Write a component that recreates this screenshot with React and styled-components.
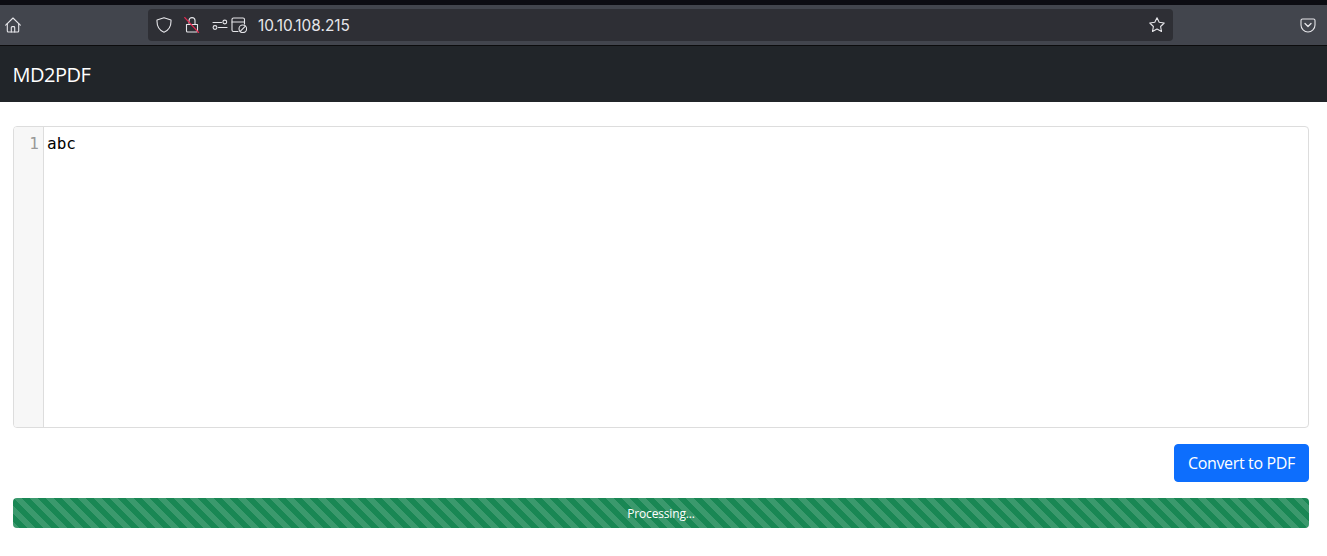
import React from "react";
import styled, { createGlobalStyle } from "styled-components";

const Global = createGlobalStyle`
  html, body { margin: 0; padding: 0; background: #fff; }
  body { font-family: "Open Sans", "Noto Sans", sans-serif; color: #212529; }
  * { box-sizing: border-box; }
`;

const TopStrip = styled.div`height: 5px; background: #0c0c12;`;

const Toolbar = styled.div`
  height: 40px;
  background: #42454d;
  display: flex;
  align-items: center;
  padding: 0 11px 0 5px;
`;

const ToolbarEdge = styled.div`height: 1px; background: #0c0c0d;`;

const IconSlot = styled.span`
  display: inline-flex;
  align-items: center;
  justify-content: center;
  color: #e6e6ea;
  flex: none;
`;

const HomeSlot = styled(IconSlot)`width: 16px; margin-right: 127px;`;

const UrlBar = styled.div`
  width: 1025px;
  height: 32px;
  background: #2e2f35;
  border-radius: 4px;
  display: flex;
  align-items: center;
  padding: 0 8px;
  color: #e6e6ea;
`;

const UrlIcons = styled.div`
  display: flex;
  align-items: center;
  gap: 12px;
  width: 102px;
  flex: none;
`;

const UrlPair = styled.div`display: flex; align-items: center; gap: 3px;`;

const UrlText = styled.span`
  font-size: 15.4px;
  flex: 1;
  font-family: "Inter", "Noto Sans", sans-serif;
  font-weight: 400;
`;

const PocketSlot = styled(IconSlot)`margin-left: auto;`;

const Navbar = styled.nav`
  height: 56px;
  background: #212529;
  display: flex;
  align-items: center;
  padding: 2px 13px 0 12.500px;
`;

const Brand = styled.span`
  font-size: 20px;
  line-height: 30px;
  color: #fff;
  font-weight: 400;
  letter-spacing: -0.5px;
`;

const Main = styled.main`
  padding: 24px 18px 0 13px;
  display: flex;
  flex-direction: column;
`;

const Editor = styled.div`
  height: 302px;
  border: 1px solid #ddd;
  border-radius: 4px;
  display: flex;
  overflow: hidden;
  font-family: "DejaVu Sans Mono", monospace;
  font-size: 16px;
  line-height: 22.4px;
`;

const Gutter = styled.div`
  width: 30px;
  background: #f7f7f7;
  border-right: 1px solid #ddd;
  color: #999;
  text-align: right;
  padding: 6px 4px 0 0;
`;

const Code = styled.div`
  flex: 1;
  color: #000;
  padding: 6px 0 0 3px;
`;

const Actions = styled.div`
  display: flex;
  justify-content: flex-end;
  margin-top: 16px;
`;

const Button = styled.button`
  height: 38px;
  width: 135px;
  background: #0d6efd;
  border: 1px solid #0d6efd;
  border-radius: 4px;
  color: #fff;
  font-family: inherit;
  font-size: 16px;
  line-height: 24px;
  letter-spacing: -0.35px;
  padding: 0;
`;

const Progress = styled.div`
  margin-top: 16px;
  height: 30px;
  border-radius: 4px;
  overflow: hidden;
  background-color: #198754;
  background-image: linear-gradient(
    45deg,
    rgba(255, 255, 255, 0.15) 25%,
    transparent 25%,
    transparent 50%,
    rgba(255, 255, 255, 0.15) 50%,
    rgba(255, 255, 255, 0.15) 75%,
    transparent 75%,
    transparent
  );
  background-size: 16px 16px;
  color: #fff;
  font-size: 12px;
  line-height: 31px;
  letter-spacing: -0.15px;
  text-align: center;
`;

const Stroke = ({ size = 16, children, sw = 1.1 }) => (
  <svg width={size} height={size} viewBox="0 0 16 16" fill="none" stroke="currentColor" strokeWidth={sw} strokeLinecap="round" strokeLinejoin="round">
    {children}
  </svg>
);

export default function App() {
  return (
    <>
      <Global />
      <TopStrip />
      <Toolbar>
        <HomeSlot>
          <Stroke>
            <path d="M.7 8.200 8 1 15.300 8.200" />
            <path d="M2.300 6.500V14a1 1 0 0 0 1 1h9.400a1 1 0 0 0 1-1V6.500" />
            <path d="M6.300 15V10.500a.9.9 0 0 1 .9-.9h1.600a.9.9 0 0 1 .9.900V15" />
          </Stroke>
        </HomeSlot>
        <UrlBar>
          <UrlIcons>
            <IconSlot>
              <Stroke>
                <path d="M8 .8 15 3C15.300 9 13 13.300 8 15.300 3 13.300.7 9 1 3Z" />
              </Stroke>
            </IconSlot>
            <IconSlot>
              <Stroke>
                <path d="M5 6.200V3.600a3 3 0 0 1 6 0V7.500" />
                <path d="M2.500 7.500h11v6.500a1 1 0 0 1-1 1h-9a1 1 0 0 1-1-1Z" />
                <path d="M.8.6 14.500 15.400" stroke="#e22850" strokeWidth="1.300" />
              </Stroke>
            </IconSlot>
            <UrlPair>
              <IconSlot>
                <Stroke>
                  <path d="M1 5.500H9.500" />
                  <circle cx="12.800" cy="5" r="1.900" />
                  <circle cx="3" cy="10.500" r="1.900" />
                  <path d="M6.500 10.500h8.500" />
                </Stroke>
              </IconSlot>
              <IconSlot>
                <Stroke>
                  <path d="M7 14.500H2.500a1.500 1.500 0 0 1-1.500-1.500V2.500A1.500 1.500 0 0 1 2.500 1h9.500a1.500 1.500 0 0 1 1.500 1.500V7" />
                  <path d="M1 5h12.500" />
                  <circle cx="11.800" cy="11.800" r="3.800" />
                  <path d="M9.200 14.400 14.400 9.200" />
                </Stroke>
              </IconSlot>
            </UrlPair>
          </UrlIcons>
          <UrlText>10.10.108.215</UrlText>
          <IconSlot>
            <Stroke>
              <path d="M8 .8 10.200 5.300l5 .7-3.600 3.500.9 5L8 12.100l-4.500 2.400.9-5L.8 6l5-.7Z" />
            </Stroke>
          </IconSlot>
        </UrlBar>
        <PocketSlot>
          <Stroke>
            <path d="M2.500 2h11A1.500 1.500 0 0 1 15 3.500V8a7 7 0 0 1-14 0V3.500A1.500 1.500 0 0 1 2.500 2Z" />
            <path d="M5 6.500 8 9.500l3-3" strokeWidth="1.300" />
          </Stroke>
        </PocketSlot>
      </Toolbar>
      <ToolbarEdge />
      <Navbar>
        <Brand>MD2PDF</Brand>
      </Navbar>
      <Main>
        <Editor>
          <Gutter>1</Gutter>
          <Code>abc</Code>
        </Editor>
        <Actions>
          <Button>Convert to PDF</Button>
        </Actions>
        <Progress>Processing...</Progress>
      </Main>
    </>
  );
}
